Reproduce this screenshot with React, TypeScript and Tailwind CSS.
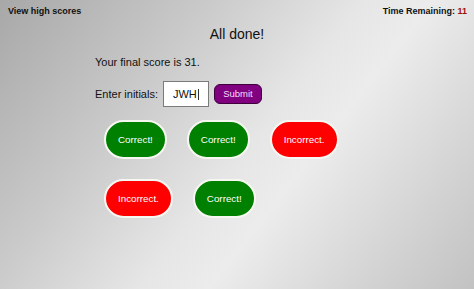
import React from "react";

const answers = [
  { label: "Correct!", ok: true },
  { label: "Correct!", ok: true },
  { label: "Incorrect.", ok: false },
  { label: "Incorrect.", ok: false },
  { label: "Correct!", ok: true },
];

function Pill({ label, ok }: { label: string; ok: boolean }) {
  return (
    <div
      className={
        "flex h-[39px] items-center rounded-full border-2 border-[#f7f7f2] px-[12px] text-[9.8px] leading-[11px] text-white " +
        (ok ? "bg-[#008000]" : "bg-[#ff0000]")
      }
    >
      {label}
    </div>
  );
}

export default function App() {
  return (
    <div className="h-[289px] w-[474px] overflow-hidden bg-[linear-gradient(128deg,#a8a8a8_0%,#cacaca_30%,#e6e6e6_52%,#ececec_62%,#d2d2d2_85%,#c2c2c2_100%)] font-['Liberation_Sans',Arial,sans-serif] text-[#111]">
      <header className="flex h-[24px] items-center justify-between pl-[8px] pr-[7px] text-[9px] font-bold">
        <a href="#">View high scores</a>
        <div>
          Time Remaining: <span className="text-[#a01010]">11</span>
        </div>
      </header>

      <h1 className="mt-[2px] text-center text-[14px] leading-[16px]">All done!</h1>

      <div className="ml-[95px]">
        <p className="mt-[14px] text-[11px] leading-[13px]">Your final score is 31.</p>

        <div className="mt-[12px] flex items-center text-[11px]">
          <span>Enter initials:</span>
          <div className="ml-[5px] flex h-[26px] w-[46px] items-center border border-[#7a7a7a] bg-white pl-[9px] text-[11px]">
            JWH<span className="ml-px h-[11px] w-px bg-[#333]" />
          </div>
          <button className="ml-[5px] h-[20px] w-[48px] rounded-[6px] border border-[#3d003d] bg-[#800080] text-[9.5px] text-[#f6dcf6]">
            Submit
          </button>
        </div>

        <div className="ml-[9px] mt-[13px] flex w-[260px] flex-wrap gap-5">
          {answers.map((a, i) => (
            <Pill key={i} label={a.label} ok={a.ok} />
          ))}
        </div>
      </div>
    </div>
  );
}
